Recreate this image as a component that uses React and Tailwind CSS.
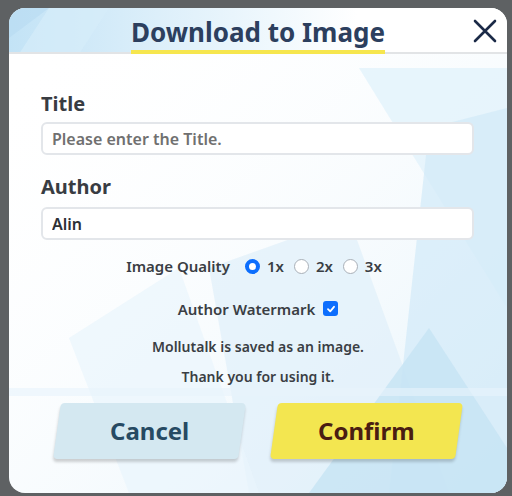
import { useState } from 'react';

const font = { fontFamily: '"Noto Sans", "Open Sans", sans-serif' };

// decorative triangle backdrop
const Backdrop = () => (
    <svg className="absolute inset-0 w-full h-full pointer-events-none" viewBox="0 0 498 485" preserveAspectRatio="none">
        <defs>
            <linearGradient id="hdr" x1="0" y1="0" x2="1" y2="0">
                <stop offset="0" stopColor="#c3e3f6" />
                <stop offset="0.45" stopColor="#e9f5fc" />
                <stop offset="0.7" stopColor="#ffffff" />
            </linearGradient>
            <linearGradient id="fade" x1="0" y1="0" x2="1" y2="1">
                <stop offset="0" stopColor="#ffffff" stopOpacity="0" />
                <stop offset="1" stopColor="#d4ebf8" stopOpacity="1" />
            </linearGradient>
        </defs>
        <rect x="0" y="0" width="498" height="46" fill="url(#hdr)" />
        <polygon points="0,0 40,0 0,30" fill="#b8dbf1" opacity="0.6" />
        <polygon points="40,0 100,0 70,46 10,46" fill="#d6ecf9" opacity="0.7" />
        <rect x="0" y="46" width="498" height="439" fill="url(#fade)" opacity="0.6" />
        <polygon points="350,60 498,60 498,300" fill="#e2f2fb" opacity="0.8" />
        <polygon points="200,260 340,210 440,485 240,485" fill="#dff0fa" opacity="0.7" />
        <polygon points="420,120 498,100 498,485 380,485" fill="#d2eaf8" opacity="0.7" />
        <polygon points="60,330 170,260 250,485 120,485" fill="#e9f5fc" opacity="0.7" />
        <polygon points="300,485 420,320 498,440 498,485" fill="#c6e3f4" opacity="0.8" />
        <polygon points="0,380 498,380 498,388 0,388" fill="#e8f4fb" opacity="0.6" />
    </svg>
);

const Radio = ({ checked, label, onClick }) => (
    <button type="button" onClick={onClick} className="flex items-center gap-[7px]">
        {checked ? (
            <span className="w-[15px] h-[15px] rounded-full border-[4.5px] border-[#0d6efd] bg-white" />
        ) : (
            <span className="w-[15px] h-[15px] rounded-full border border-[#a9b0b8] bg-white" />
        )}
        <span className="text-[15px] font-semibold text-[#3a3e44]">{label}</span>
    </button>
);

const App = () => {
    const [quality, setQuality] = useState('1x');
    const [author, setAuthor] = useState('Alin');
    const [title, setTitle] = useState('');

    return (
        <div className="w-[512px] h-[496px] bg-[#5e6163] pl-[9px] pt-[8px]" style={font}>
            <div className="relative w-[498px] h-[485px] rounded-[16px] overflow-hidden bg-white">
                <Backdrop />

                <div className="relative flex flex-col h-full">
                    {/* Header */}
                    <div className="relative h-[46px] flex justify-center border-b-2 border-[#e2e4e6]">
                        <h2 className="relative text-[26px] leading-none font-bold text-[#2c3f5e] pt-[11px] h-[46px]">
                            Download to Image
                            <span className="absolute left-0 right-0 bottom-0 h-[4px] bg-[#f6e64e]" />
                        </h2>
                        <button className="absolute right-[10px] top-[11px] text-[#1b2a47]">
                            <svg width="24" height="24" viewBox="0 0 24 24" fill="none" stroke="currentColor" strokeWidth="2.6" strokeLinecap="round">
                                <path d="M2 2 L22 22 M22 2 L2 22" />
                            </svg>
                        </button>
                    </div>

                    {/* Body */}
                    <div className="px-[32px] pt-[38px]">
                        <label className="block text-[20px] leading-[24px] font-bold text-[#383c42]">Title</label>
                        <input
                            value={title}
                            onChange={(e) => setTitle(e.target.value)}
                            placeholder="Please enter the Title."
                            className="mt-[6px] w-[433px] h-[33px] rounded-[6px] border-2 border-[#e3e6ea] bg-white px-[9px] text-[16px] font-semibold text-[#333] placeholder:text-[#707070] outline-none"
                        />
                        <label className="block mt-[20px] text-[20px] leading-[24px] font-bold text-[#383c42]">Author</label>
                        <input
                            value={author}
                            onChange={(e) => setAuthor(e.target.value)}
                            className="mt-[8px] w-[433px] h-[33px] rounded-[6px] border-2 border-[#e3e6ea] bg-white px-[9px] text-[16px] font-semibold text-[#2d3035] outline-none"
                        />
                    </div>

                    <div className="flex items-center justify-center gap-[15px] mt-[15px] mr-[8px]">
                        <span className="text-[15px] font-semibold text-[#3a3e44]">Image Quality</span>
                        <div className="flex items-center gap-[10px]">
                            {['1x', '2x', '3x'].map((q) => (
                                <Radio key={q} label={q} checked={quality === q} onClick={() => setQuality(q)} />
                            ))}
                        </div>
                    </div>

                    <div className="flex items-center justify-center gap-[8px] mt-[20px]">
                        <span className="text-[15px] font-semibold text-[#3a3e44]">Author Watermark</span>
                        <span className="w-[15px] h-[15px] rounded-[3px] bg-[#0d6efd] flex items-center justify-center">
                            <svg width="10" height="10" viewBox="0 0 10 10" fill="none" stroke="white" strokeWidth="1.8" strokeLinecap="round" strokeLinejoin="round">
                                <path d="M2 5.2 L4.2 7.3 L8 2.8" />
                            </svg>
                        </span>
                    </div>

                    <div className="flex flex-col items-center mt-[12px] text-[14px] font-semibold text-[#3a3e44] leading-[30px]">
                        <p>Mollutalk is saved as an image.</p>
                        <p>Thank you for using it.</p>
                    </div>

                    {/* Footer */}
                    <div className="flex justify-center gap-[32px] mt-[11px]">
                        <button className="w-[185px] h-[56px] -skew-x-[8deg] rounded-[4px] bg-[#d4e8f1] shadow-[0_3px_3px_rgba(0,0,0,0.18)] flex items-center justify-center">
                            <span className="skew-x-[8deg] text-[24px] font-bold text-[#264a63]">Cancel</span>
                        </button>
                        <button className="w-[185px] h-[56px] -skew-x-[8deg] rounded-[4px] bg-[#f3e650] shadow-[0_3px_3px_rgba(0,0,0,0.18)] flex items-center justify-center">
                            <span className="skew-x-[8deg] text-[24px] font-bold text-[#4a1d12]">Confirm</span>
                        </button>
                    </div>
                </div>
            </div>
        </div>
    );
};

export default App;
